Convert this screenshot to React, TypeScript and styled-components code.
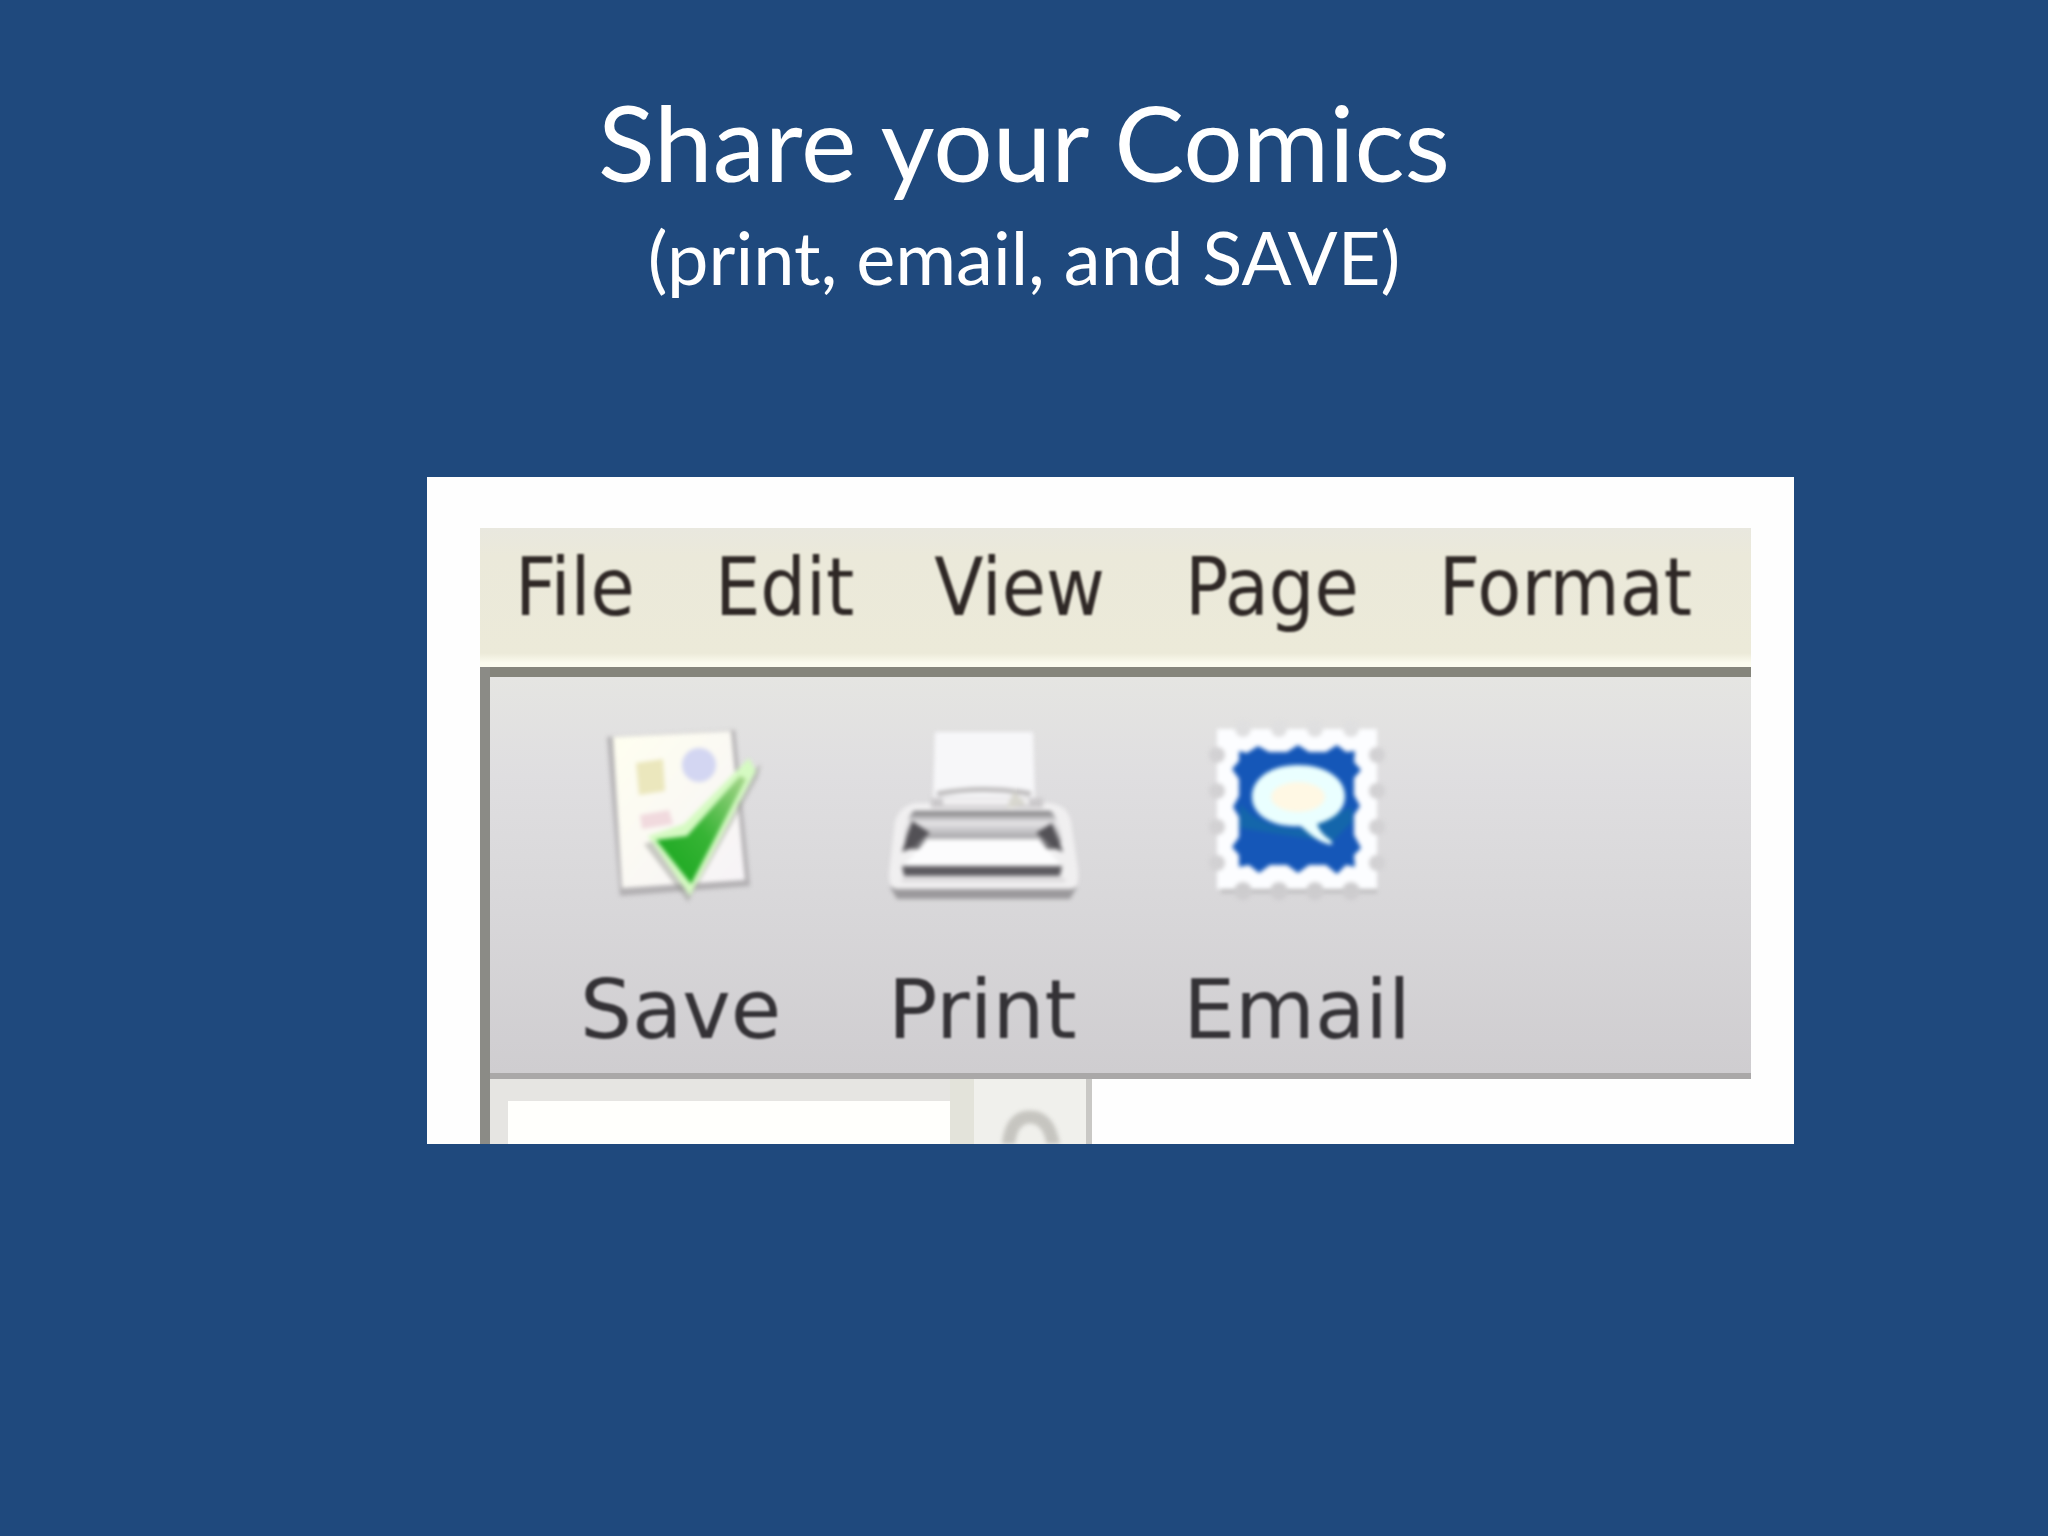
import React from "react";
import styled, { createGlobalStyle } from "styled-components";

const GlobalStyle = createGlobalStyle`
  * { box-sizing: border-box; }
  body { margin: 0; background: #1f497d; }
`;

const Slide = styled.main`
  min-height: 100vh;
  display: flex;
  flex-direction: column;
  background: #1f497d;
  padding-top: 81px;
`;

const Heading = styled.header`
  text-align: center;
  color: #ffffff;
  font-family: Lato, "Open Sans", sans-serif;
  margin-bottom: 164px;
`;

const Title = styled.h1`
  margin: 0;
  font-size: 105px;
  line-height: 120px;
  font-weight: 400;
`;

const Subtitle = styled.p`
  margin: 0;
  font-size: 74px;
  line-height: 112px;
`;

const Capture = styled.section`
  width: 66.75%;
  margin-left: 20.85%;
  padding: 51px 43px 0 53px;
  background: #fefefe;
`;

const MenuBar = styled.nav`
  height: 139px;
  padding: 0 35px;
  display: flex;
  align-items: center;
  gap: 80px;
  background: linear-gradient(#e9e8df, #ebe9da 20%, #ecead9 90%, #fbfbee 97%);
`;

const MenuButton = styled.button`
  border: 0;
  padding: 0 0 20px;
  background: none;
  color: #2f2826;
  font-family: "DejaVu Sans Condensed", "Noto Sans", sans-serif;
  font-size: 80px;
  line-height: 96px;
  filter: blur(1px);
`;

const Window = styled.div`
  border-left: 10px solid #8b8b86;
`;

const Toolbar = styled.div`
  display: flex;
  align-items: flex-start;
  gap: 101px;
  padding: 32px 90px 15px;
  border-top: 10px solid #85857b;
  border-bottom: 6px solid #aaa8a8;
  background: linear-gradient(#e5e5e2, #dfdee0 25%, #d9d8da 55%, #cfcdd0);
`;

const ToolButton = styled.button`
  border: 0;
  padding: 0;
  background: none;
  display: flex;
  flex-direction: column;
  align-items: center;
  gap: 53px;
  color: #343236;
  font-family: "DejaVu Sans", sans-serif;
  font-size: 82px;
  line-height: 96px;
`;

const ToolLabel = styled.span`
  filter: blur(1px);
`;

const Icon = styled.svg`
  width: 200px;
  height: 200px;
  filter: blur(2px);
`;

const Workspace = styled.div`
  height: 65px;
  display: flex;
  overflow: hidden;
`;

const Sidebar = styled.div`
  width: 460px;
  padding: 22px 0 0 18px;
  background: #e6e5e2;
  display: flex;
`;

const Field = styled.div`
  flex: 1;
  background: #fffffc;
`;

const ScrollTrack = styled.div`
  width: 142px;
  display: flex;
  justify-content: center;
  border-left: 24px solid #e3e3da;
  border-right: 6px solid #c9c8c5;
  background: #f0f0ec;
`;

const Arrow = styled.svg`
  width: 100px;
  height: 65px;
  filter: blur(2px);
`;

function SaveIcon() {
  return (
    <Icon viewBox="580 710 200 200" aria-hidden="true">
      <defs>
        <linearGradient id="check" x1="0" y1="1" x2="1" y2="0">
          <stop offset="0" stopColor="#15a51c" />
          <stop offset="0.5" stopColor="#37b435" />
          <stop offset="1" stopColor="#a9d68d" />
        </linearGradient>
        <linearGradient id="sheet" x1="0" y1="0" x2="1" y2="1">
          <stop offset="0" stopColor="#fffff0" />
          <stop offset="1" stopColor="#f6f3f7" />
        </linearGradient>
      </defs>
      <path d="M606 738L734 731L749 887L619 897Z" fill="#a9a6a9" opacity="0.8" />
      <path d="M612 738L730 732L744 881L621 889Z" fill="url(#sheet)" />
      <path d="M635 764L662 760L664 792L638 796Z" fill="#ebe7bd" />
      <path d="M639 816L668 811L672 825L641 830Z" fill="#f1dade" />
      <circle cx="698" cy="766" r="17" fill="#d3d6f2" />
      <path d="M643 845L687 903L757 778L760 765L686 830L666 838Z" fill="#8b8e87" opacity="0.45" />
      <path d="M647 837L689 897L755 772L748 759L683 825Z" fill="#d5fac2" />
      <path d="M655 841L690 885L745 780L739 777L686 837Z" fill="url(#check)" />
    </Icon>
  );
}

function PrintIcon() {
  return (
    <Icon viewBox="885 710 200 200" aria-hidden="true">
      <defs>
        <linearGradient id="slot" x1="0" y1="0" x2="0" y2="1">
          <stop offset="0" stopColor="#777679" />
          <stop offset="0.3" stopColor="#e7e6e8" />
          <stop offset="0.7" stopColor="#aaa9ac" />
          <stop offset="1" stopColor="#5b5a5e" />
        </linearGradient>
      </defs>
      <path d="M893 888L1080 888L1073 900L900 900Z" fill="#9b999c" />
      <path d="M900 890C892 890 891 878 893 866L898 822Q904 806 919 804L1052 804Q1071 806 1074 823L1081 870Q1083 890 1074 890Z" fill="#f0eff0" />
      <path d="M938 733H1036L1038 804H936Z" fill="#f7f7f9" />
      <path d="M940 795Q987 786 1034 795" stroke="#bdbbbc" strokeWidth="5" fill="none" />
      <path d="M934 799H1046V809H934Z" fill="#cbc9cb" />
      <path d="M946 800H1032V806H946Z" fill="#f4f3f4" />
      <path d="M1017 792L1029 805L1009 810Z" fill="#d8d7cf" />
      <path d="M917 812H1053Q1061 816 1064 843L1060 850H908Q908 818 917 812Z" fill="url(#slot)" />
      <path d="M915 822L905 853L915 849L933 834Z" fill="#535156" />
      <path d="M1055 824L1066 853L1057 849L1039 834Z" fill="#535156" />
      <path d="M930 840L1042 840L1065 868L906 868Z" fill="#fcfcfd" />
      <path d="M905 867H1065L1063 877H907Z" fill="#5d5b60" />
      <path d="M905 881H1068" stroke="#d5d3d5" strokeWidth="3" />
    </Icon>
  );
}

const perforations = [38, 74, 110, 146];

function EmailIcon() {
  return (
    <Icon viewBox="0 0 200 200" aria-hidden="true">
      <path d="M24 176H180V184H24Z" fill="#aaa8aa" opacity="0.6" />
      <rect x="20" y="20" width="160" height="160" fill="#fcfdff" />
      {perforations.map((p) => (
        <g key={p}>
          <circle cx={p + 8} cy="20" r="8" fill="#dfdfe0" />
          <circle cx={p + 8} cy="182" r="9" fill="#cdccce" />
          <circle cx="20" cy={p + 8} r="8" fill="#d2d1d3" />
          <circle cx="180" cy={p + 8} r="8" fill="#d2d1d3" />
        </g>
      ))}
      <path d="M42 42L50 44L61 37L72 43H90L101 36L112 43H129L140 36L149 43L158 42L157 53L164 61L157 69V86L163 97L157 106V126L164 139L157 146L158 158L149 156L140 165L129 156H112L101 164L90 156H73L62 164L52 156L42 158V146L35 138L42 128V108L36 98L42 87V70L35 60L42 52Z" fill="#1557b8" />
      <path d="M43 95Q66 121 105 120L155 98V113L135 133L43 119Z" fill="#146ca5" opacity="0.7" />
      <path d="M101 56C73 56 55 70 55 88C55 106 76 119 103 117C110 121 116 131 131 135C137 137 136 133 132 130Q123 124 120 115Q148 107 148 87C148 69 128 56 101 56Z" fill="#eaffff" />
      <ellipse cx="101" cy="88" rx="27" ry="15" fill="#fff8e4" />
    </Icon>
  );
}

const menus = ["File", "Edit", "View", "Page", "Format"];

const tools = [
  { label: "Save", Glyph: SaveIcon },
  { label: "Print", Glyph: PrintIcon },
  { label: "Email", Glyph: EmailIcon },
];

export default function App() {
  return (
    <>
      <GlobalStyle />
      <Slide>
        <Heading>
          <Title>Share your Comics</Title>
          <Subtitle>(print, email, and SAVE)</Subtitle>
        </Heading>
        <Capture>
          <MenuBar>
            {menus.map((menu) => (
              <MenuButton key={menu} type="button">{menu}</MenuButton>
            ))}
          </MenuBar>
          <Window>
            <Toolbar>
              {tools.map(({ label, Glyph }) => (
                <ToolButton key={label} type="button">
                  <Glyph />
                  <ToolLabel>{label}</ToolLabel>
                </ToolButton>
              ))}
            </Toolbar>
            <Workspace>
              <Sidebar>
                <Field />
              </Sidebar>
              <ScrollTrack>
                <Arrow viewBox="0 0 100 65" aria-hidden="true">
                  <path d="M28 70Q30 38 50 38Q70 38 74 70" fill="none" stroke="#c6c5c0" strokeWidth="13" />
                </Arrow>
              </ScrollTrack>
            </Workspace>
          </Window>
        </Capture>
      </Slide>
    </>
  );
}
